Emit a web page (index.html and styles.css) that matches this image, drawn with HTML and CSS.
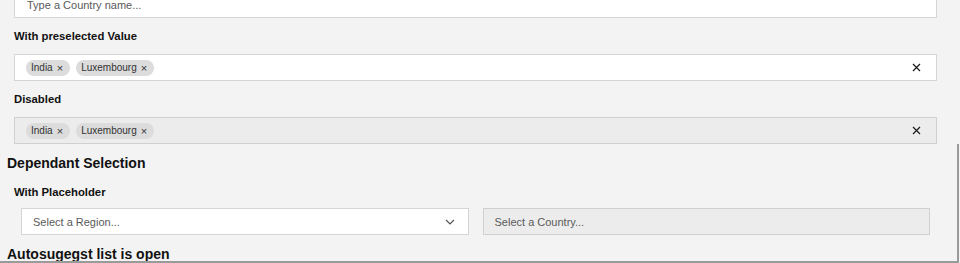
FILE: index.html
```html
<!DOCTYPE html>
<html lang="en">
<head>
    <meta charset="UTF-8">
    <meta name="viewport" content="width=device-width, initial-scale=1.0">
    <title>Multiselect</title>
    <link rel="stylesheet" href="styles.css">
</head>
<body>
    <div class="page">
        <div class="group">
            <div class="select-box first">
                <span class="placeholder">Type a Country name...</span>
            </div>

            <label class="field-label">With preselected Value</label>
            <div class="select-box">
                <div class="chips">
                    <span class="chip">India <span class="chip-x">&times;</span></span>
                    <span class="chip">Luxembourg <span class="chip-x">&times;</span></span>
                </div>
                <svg class="clear" width="9" height="9" viewBox="0 0 9 9"><path d="M1 1L8 8M8 1L1 8" stroke="#1a1a1a" stroke-width="1.2"/></svg>
            </div>

            <label class="field-label">Disabled</label>
            <div class="select-box disabled">
                <div class="chips">
                    <span class="chip">India <span class="chip-x">&times;</span></span>
                    <span class="chip">Luxembourg <span class="chip-x">&times;</span></span>
                </div>
                <svg class="clear" width="9" height="9" viewBox="0 0 9 9"><path d="M1 1L8 8M8 1L1 8" stroke="#1a1a1a" stroke-width="1.2"/></svg>
            </div>
        </div>

        <div class="frame">
            <h3>Dependant Selection</h3>
            <div class="group">
                <label class="field-label">With Placeholder</label>
                <div class="select-row">
                    <div class="select-box">
                        <span class="placeholder">Select a Region...</span>
                        <svg class="chevron" width="10" height="6" viewBox="0 0 10 6"><path d="M1 1L5 5L9 1" fill="none" stroke="#555" stroke-width="1.2"/></svg>
                    </div>
                    <div class="select-box disabled">
                        <span class="placeholder">Select a Country...</span>
                    </div>
                </div>
            </div>
            <h3>Autosugegst list is open</h3>
        </div>
    </div>
</body>
</html>
```

FILE: styles.css
```css
body {
    margin: 0;
    background-color: #f3f3f3;
    font-family: "Liberation Sans", Arial, sans-serif;
    color: #111;
    overflow: hidden;
}
.page {
    padding-left: 7px;
}
.group {
    padding: 0 23px 0 7px;
}
.select-box {
    box-sizing: border-box;
    height: 27px;
    display: flex;
    align-items: center;
    justify-content: space-between;
    padding: 0 12px 0 11px;
    background-color: #fff;
    border: 1px solid #d5d5d5;
}
.select-box.first {
    margin-top: -9px;
    padding-left: 12px;
}
.select-box.first + .field-label {
    margin-top: 11px;
}
.select-box.disabled {
    background-color: #ececec;
    border-color: #d0d0d0;
}
.placeholder {
    font-size: 11px;
    color: #5a5a5a;
}
.field-label {
    display: block;
    font-size: 11.3px;
    font-weight: bold;
    line-height: 14px;
    margin: 11px 0;
}
.chips {
    display: flex;
    gap: 6px;
}
.chip {
    display: inline-flex;
    align-items: center;
    height: 16px;
    padding: 0 7px 0 5px;
    border-radius: 8px;
    background-color: #dcdcdc;
    font-size: 10px;
    color: #333;
}
.chip-x {
    margin-left: 4px;
    font-size: 11px;
}
.clear {
    margin-right: 3px;
}
.frame {
    height: 117px;
    margin-right: 1px;
    margin-left: -7px;
    padding-left: 7px;
    border-right: 2px solid #9a9a9a;
    border-bottom: 2px solid #9a9a9a;
    overflow: hidden;
}
.frame .group {
    padding-right: 20px;
}
h3 {
    font-size: 14px;
    line-height: 17px;
    margin: 11px 0 0;
}
.frame .field-label {
    margin: 13px 0 9px;
}
.select-row {
    display: flex;
    gap: 14px;
    padding: 0 7px;
}
.select-row .select-box {
    flex: 1;
    padding-left: 11px;
}
.chevron {
    margin-right: 1px;
}
.group + h3 {
    margin-top: 11px;
}
```
